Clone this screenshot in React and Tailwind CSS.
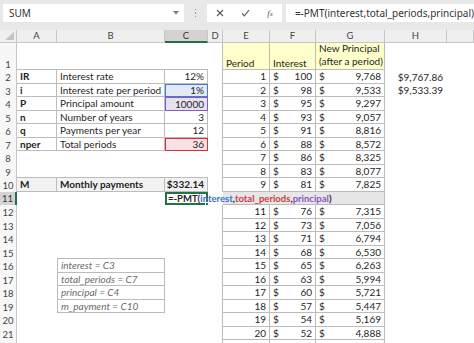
const FONT = { fontFamily: "Lato, 'Liberation Sans', sans-serif" };
const UI_FONT = { fontFamily: "'Noto Sans', 'Liberation Sans', sans-serif" };

const COLS = ["A", "B", "C", "D", "E", "F", "G", "H", ""];

const inputs = {
  2: ["IR", "Interest rate", "12%", ""],
  3: ["i", "Interest rate per period", "1%", "blue"],
  4: ["P", "Principal amount", "10000", "purple"],
  5: ["n", "Number of years", "3", ""],
  6: ["q", "Payments per year", "12", ""],
  7: ["nper", "Total periods", "36", "red"],
};

const refStyle = {
  blue: "border border-[#4a7ad2] bg-[#e1eaf7]",
  purple: "border border-[#8559c0] bg-[#e7e0f1]",
  red: "border border-[#d03340] bg-[#f8e1e3]",
};

const notes = {
  16: "interest = C3",
  17: "total_periods = C7",
  18: "principal = C4",
  19: "m_payment = C10",
};

const schedule = [
  [100, "9,768"], [98, "9,533"], [95, "9,297"], [93, "9,057"], [91, "8,816"],
  [88, "8,572"], [86, "8,325"], [83, "8,077"], [81, "7,825"], [78, "7,571"],
  [76, "7,315"], [73, "7,056"], [71, "6,794"], [68, "6,530"], [65, "6,263"],
  [63, "5,994"], [60, "5,721"], [57, "5,447"], [54, "5,169"], [52, "4,888"],
];

const hValues = { 2: "$9,767.86", 3: "$9,533.39" };

const ROWS = Array.from({ length: 22 }, (_, i) => i + 1);

function Toolbar() {
  return (
    <div className="flex h-[30px] items-start bg-[#e8e8e8] pt-[4px]" style={UI_FONT}>
      <div className="ml-[3px] flex h-[18px] w-[182px] items-center justify-between bg-white pl-[6px] pr-[5px]">
        <span className="text-[10px] leading-none text-[#333]">SUM</span>
        <svg width="6" height="4" viewBox="0 0 6 4">
          <path d="M0 0h6L3 3.5z" fill="#777" />
        </svg>
      </div>
      <div className="flex h-[18px] w-[23px] flex-col items-center justify-center gap-[2px]">
        <span className="h-[1.5px] w-[1.5px] bg-[#999]" />
        <span className="h-[1.5px] w-[1.5px] bg-[#999]" />
        <span className="h-[1.5px] w-[1.5px] bg-[#999]" />
      </div>
      <div className="flex h-[18px] w-[75px] items-center bg-white">
        <svg className="ml-[9px]" width="8" height="8" viewBox="0 0 8 8">
          <path d="M1 1l6 6M7 1l-6 6" stroke="#555" strokeWidth="1.1" />
        </svg>
        <svg className="ml-[17px]" width="9" height="8" viewBox="0 0 9 8">
          <path d="M1 4.3l2.4 2.5L8 1" stroke="#555" strokeWidth="1.1" fill="none" />
        </svg>
        <span
          className="ml-[17px] text-[9px] italic leading-none text-[#555]"
          style={{ fontFamily: "'Liberation Serif', serif" }}
        >
          f<span className="text-[7px]">x</span>
        </span>
      </div>
      <div className="ml-[4px] flex h-[18px] flex-1 items-center bg-white pl-[9px]">
        <span className="whitespace-nowrap text-[10px] leading-none text-[#333]">
          =-PMT(interest,total_periods,principal)
        </span>
      </div>
    </div>
  );
}

function HeaderRow() {
  return (
    <>
      <div className="relative h-[13px] border-r border-b border-[#c6c6c6] bg-[#efefef]">
        <svg className="absolute bottom-[2px] right-[2px]" width="9" height="8" viewBox="0 0 9 8">
          <path d="M9 0v8H0z" fill="#c4c4c4" />
        </svg>
      </div>
      {COLS.map((c, i) => (
        <div
          key={i}
          className={
            c === "C"
              ? "flex h-[13px] items-center justify-center border-r border-b-2 border-r-[#c6c6c6] border-b-[#217346] bg-[#d3d3d3] text-[9.5px] text-[#333]"
              : "flex h-[13px] items-center justify-center border-r border-b border-[#c6c6c6] bg-[#efefef] text-[9.5px] text-[#444]"
          }
        >
          {c}
        </div>
      ))}
    </>
  );
}

function Money({ v }) {
  return (
    <>
      <span>$</span>
      <span>{v}</span>
    </>
  );
}

function cellFor(r, c) {
  const line = "border-[#bcbcbc]";
  const txt = "flex items-center px-[3px] whitespace-nowrap";

  // A
  if (c === 0) {
    if (inputs[r]) return [`${txt} font-bold border-r border-b ${line}`, inputs[r][0]];
    if (r === 10) return [`${txt} font-bold border-r border-b ${line} bg-[#f2f2f2]`, "M"];
    if (r === 1 || r === 9) return [`border-b ${line}`, null];
    return ["", null];
  }
  // B
  if (c === 1) {
    if (inputs[r]) return [`${txt} border-r border-b ${line}`, inputs[r][1]];
    if (r === 10) return [`${txt} font-bold border-r border-b ${line} bg-[#f2f2f2]`, "Monthly payments"];
    if (notes[r])
      return [`${txt} italic text-[#6b6b6b] border-l border-r border-b ${line}`, notes[r]];
    if (r === 1 || r === 9 || r === 15) return [`border-b ${line}`, null];
    return ["", null];
  }
  // C
  if (c === 2) {
    if (inputs[r]) {
      const ref = inputs[r][3];
      return [
        ref ? `${txt} justify-end ${refStyle[ref]}` : `${txt} justify-end border-r border-b ${line}`,
        inputs[r][2],
      ];
    }
    if (r === 10) return [`${txt} justify-end font-bold border-r border-b ${line} bg-[#f2f2f2]`, "$332.14"];
    if (r === 11) return ["edit", null];
    if (r === 1 || r === 9) return [`border-b ${line}`, null];
    return ["", null];
  }
  // D
  if (c === 3) {
    if (r === 11) return ["", null];
    return [`border-r ${line}`, null];
  }
  // E, F, G
  if (c >= 4 && c <= 6) {
    if (r === 1) {
      const head = c === 4 ? "Period" : c === 5 ? "Interest" : (
        <span className="flex flex-col leading-[13px]">
          <span>New Principal</span>
          <span>(after a period)</span>
        </span>
      );
      return [`flex items-end px-[3px] pb-[1px] whitespace-nowrap bg-[#ffffcc] border-r border-b ${line}`, head];
    }
    if (r === 11) {
      return [`bg-[#e6e6e6] border-b ${line} ${c === 6 ? "border-r" : ""}`, null];
    }
    if (r >= 2 && r <= 21) {
      const [interest, principal] = schedule[r - 2];
      if (c === 4) return [`${txt} justify-end border-r border-b ${line}`, r - 1];
      if (c === 5) return [`${txt} justify-between border-r border-b ${line}`, <Money v={interest} />];
      return [`${txt} justify-between border-r border-b ${line}`, <Money v={principal} />];
    }
    return [`border-r ${line}`, null];
  }
  // H
  if (c === 7 && hValues[r]) return [`${txt} justify-end pr-[4px]`, hValues[r]];
  return ["", null];
}

function EditCell() {
  return (
    <div className="relative z-10 flex h-[13.5px] items-center border-2 border-[#217346] bg-white pl-[1px] whitespace-nowrap text-[9.5px] font-bold">
      <span className="text-[#262626]">=-PMT(</span>
      <span className="text-[#3b6fd1]">interest</span>
      <span className="text-[#262626]">,</span>
      <span className="text-[#cf3a45]">total_periods</span>
      <span className="text-[#262626]">,</span>
      <span className="text-[#8a55c4]">principal</span>
      <span className="text-[#262626]">)</span>
      <span className="ml-px h-[10px] w-px bg-black" />
      <span className="absolute -bottom-[3px] -right-[3px] h-[4px] w-[4px] border border-white bg-[#217346]" />
    </div>
  );
}

function Sheet() {
  return (
    <div
      className="grid grid-cols-[17px_40px_108px_43px_15px_47px_46px_69px_62px_1fr] text-[10px] leading-none text-[#1f1f1f]"
      style={FONT}
    >
      <HeaderRow />
      {ROWS.map((r) => {
        const h = r === 1 ? "h-[27px]" : "h-[13.5px]";
        return [
          <div
            key={`h${r}`}
            className={
              r === 11
                ? `${h} flex items-center justify-center border-r-2 border-[#217346] bg-[#d3d3d3] text-[9.5px] text-[#333]`
                : `${h} flex items-end justify-center border-r border-[#c6c6c6] bg-[#f7f7f7] pb-[1px] text-[9.5px] text-[#444]`
            }
          >
            {r < 22 ? r : null}
          </div>,
          ...COLS.map((_, c) => {
            const [cls, content] = cellFor(r, c);
            if (cls === "edit") return <EditCell key={`${r}-${c}`} />;
            return (
              <div key={`${r}-${c}`} className={`${h} ${cls}`}>
                {content}
              </div>
            );
          }),
        ];
      })}
    </div>
  );
}

export default function App() {
  return (
    <div className="h-[343px] w-[474px] overflow-hidden bg-white">
      <Toolbar />
      <Sheet />
    </div>
  );
}
